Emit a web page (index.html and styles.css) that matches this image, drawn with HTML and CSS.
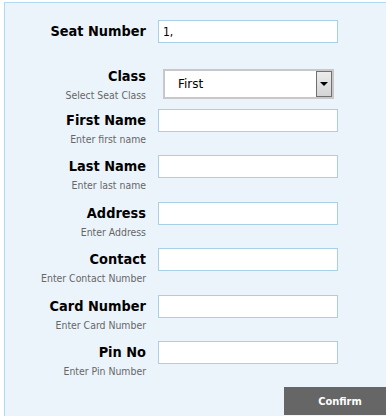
FILE: index.html
```html
<!DOCTYPE html>
<html lang="en">

<head>
    <meta charset="UTF-8">
    <meta name="viewport" content="width=device-width, initial-scale=1.0">
    <title>Passenger Details</title>
<link rel="stylesheet" href="styles.css">
</head>

<body>
    <div class="stylized">
        <!-- booking form -->
        <form id="bookingForm" class="form">
            <div class="row row-seat">
                <label class="label" for="seatNo">Seat Number</label>
                <input type="text" id="seatNo" class="input" value="1,">
            </div>

            <div class="row row-class">
                <label class="label" for="seatClass">Class
                    <span class="small">Select Seat Class</span>
                </label>
                <div class="select-box">
                    <select id="seatClass" class="select">
                        <option>First</option>
                        <option>Business</option>
                        <option>Economy</option>
                    </select>
                    <span class="select-btn"><span class="arrow"></span></span>
                </div>
            </div>

            <div class="row">
                <label class="label" for="firstName">First Name
                    <span class="small">Enter first name</span>
                </label>
                <input type="text" id="firstName" class="input">
            </div>

            <div class="row">
                <label class="label" for="lastName">Last Name
                    <span class="small">Enter last name</span>
                </label>
                <input type="text" id="lastName" class="input">
            </div>

            <div class="row">
                <label class="label" for="address">Address
                    <span class="small">Enter Address</span>
                </label>
                <input type="text" id="address" class="input">
            </div>

            <div class="row">
                <label class="label" for="contact">Contact
                    <span class="small">Enter Contact Number</span>
                </label>
                <input type="text" id="contact" class="input">
            </div>

            <div class="row">
                <label class="label" for="cardNo">Card Number
                    <span class="small">Enter Card Number</span>
                </label>
                <input type="text" id="cardNo" class="input">
            </div>

            <div class="row">
                <label class="label" for="pinNo">Pin No
                    <span class="small">Enter Pin Number</span>
                </label>
                <input type="password" id="pinNo" class="input">
            </div>

            <button type="submit" class="confirm-btn">Confirm</button>
        </form>
    </div>
</body>

</html>
```

FILE: styles.css
```css
* {
    margin: 0;
    padding: 0;
    box-sizing: border-box;
}

html,
body {
    overflow: hidden;
}

body {
    font-family: "DejaVu Sans Condensed", "DejaVu Sans", Verdana, sans-serif;
    background-color: #ffffff;
}

/* the panel runs off the right and bottom of the window */
.stylized {
    width: 382px;
    height: 414px;
    margin: 2px 0 0 4px;
    padding-top: 17px;
    border: 1px solid #b0daf2;
    border-right: none;
    border-bottom: none;
    background-color: #ebf4fb;
    overflow: hidden;
}

.row {
    display: flex;
    align-items: flex-start;
    height: 46.4px;
}

.row-seat {
    height: 45px;
}

.row-class {
    height: 44px;
}

.label {
    display: block;
    width: 141px;
    flex-shrink: 0;
    padding-top: 3px;
    text-align: right;
    font-size: 14.4px;
    line-height: 17px;
    font-weight: bold;
    color: #000;
}

.small {
    display: block;
    margin-top: 4px;
    font-size: 10.4px;
    line-height: 13px;
    font-weight: normal;
    color: #666666;
}

.input {
    width: 180px;
    height: 23px;
    margin-left: 12px;
    padding: 0 4px;
    border: 1px solid #a8d0e6;
    background: #fff;
    font-family: "DejaVu Sans Condensed", "DejaVu Sans", sans-serif;
    font-size: 12px;
    color: #000;
    outline: none;
}

/* drop-down for the seat class */
.select-box {
    display: flex;
    width: 171px;
    height: 30px;
    margin: 4px 0 0 17px;
    border: 2px solid #c8c8c8;
    background: #fff;
}

.select {
    flex: 1;
    appearance: none;
    -webkit-appearance: none;
    border: none;
    background: transparent;
    padding-left: 13px;
    font-family: "DejaVu Sans", sans-serif;
    font-size: 12px;
    color: #000;
    outline: none;
}

.select-btn {
    display: flex;
    align-items: center;
    justify-content: center;
    width: 16px;
    height: 26px;
    border: 1px solid #707070;
    background: linear-gradient(#ececec, #d4d4d4);
}

.arrow {
    width: 0;
    height: 0;
    border-left: 4px solid transparent;
    border-right: 4px solid transparent;
    border-top: 4px solid #000;
}

.confirm-btn {
    display: block;
    flex-shrink: 0;
    width: 112px;
    min-width: 112px;
    height: 28px;
    margin: 0 0 0 279px;
    border: none;
    background-color: #666666;
    color: #fff;
    font-family: "DejaVu Sans Condensed", "DejaVu Sans", sans-serif;
    font-size: 11px;
    font-weight: bold;
    cursor: pointer;
}
```
